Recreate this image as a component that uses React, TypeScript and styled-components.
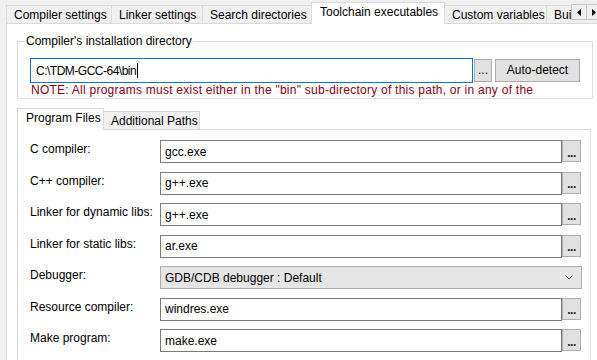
import styled, { createGlobalStyle } from "styled-components";

const GlobalStyle = createGlobalStyle`
  html, body {
    margin: 0;
    padding: 0;
    background: #f0f0f0;
  }
  * {
    box-sizing: border-box;
  }
`;

const Window = styled.div`
  width: 597px;
  height: 360px;
  overflow: hidden;
  position: relative;
  background: #f0f0f0;
  font-family: "Liberation Sans", Arial, sans-serif;
  font-size: 12px;
  color: #000;
`;

const TabStrip = styled.div`
  display: flex;
  align-items: flex-end;
  height: 23px;
  padding-left: 6px;
  white-space: nowrap;
`;

const Tab = styled.div<{ $w: number; $active?: boolean }>`
  flex: none;
  width: ${(p) => p.$w}px;
  height: ${(p) => (p.$active ? 22 : 18)}px;
  margin-right: -1px;
  margin-bottom: ${(p) => (p.$active ? -1 : 0)}px;
  padding: ${(p) => (p.$active ? "2px 0 0 8px" : "2px 0 0 7px")};
  border: 1px solid #d9d9d9;
  border-bottom: none;
  background: ${(p) => (p.$active ? "#fff" : "#f0f0f0")};
  position: relative;
  z-index: ${(p) => (p.$active ? 2 : 1)};
  line-height: 14px;
  overflow: hidden;
`;

const ScrollArrows = styled.div`
  position: absolute;
  left: 571px;
  top: 4px;
  display: flex;
  z-index: 3;
`;

const ArrowButton = styled.div`
  width: 16px;
  height: 16px;
  margin-right: -1px;
  border: 1px solid #c4c4c4;
  background: #f0f0f0;
  display: flex;
  align-items: center;
  justify-content: center;
`;

const Page = styled.div`
  width: 640px;
  height: 400px;
  margin-left: 6px;
  border: 1px solid #d9d9d9;
  background: #fff;
  padding: 10px 0 0 10px;
`;

const GroupBox = styled.fieldset`
  width: 576px;
  margin: 0;
  padding: 10px 12px 1px 12px;
  border: 1px solid #dcdcdc;
  min-width: 0;
`;

const Legend = styled.legend`
  padding: 0 1px;
  margin-left: -5px;
  line-height: 14px;
`;

const PathRow = styled.div`
  display: flex;
  align-items: center;
  height: 25px;
`;

const PathField = styled.div`
  width: 445px;
  height: 25px;
  border: 1px solid #0078d7;
  padding: 0 0 0 5px;
  display: flex;
  align-items: center;
  line-height: 14px;
  letter-spacing: -0.5px;
`;

const Caret = styled.span`
  display: inline-block;
  width: 1px;
  height: 15px;
  background: #000;
  margin-left: 1px;
`;

const PushButton = styled.div<{ $w: number; $ml?: number }>`
  flex: none;
  width: ${(p) => p.$w}px;
  height: 23px;
  margin-left: ${(p) => p.$ml ?? 0}px;
  border: 1px solid #adadad;
  background: #e1e1e1;
  display: flex;
  align-items: center;
  justify-content: center;
  line-height: 14px;
  padding-bottom: 1px;
`;

const Note = styled.div`
  color: #8c0014;
  line-height: 14px;
  white-space: nowrap;
  padding-left: 1px;
  letter-spacing: 0.25px;
`;

const InnerTabs = styled.div`
  margin-top: 9px;
`;

const InnerStrip = styled.div`
  display: flex;
  align-items: flex-end;
  height: 21px;
`;

const InnerPage = styled.div`
  width: 574px;
  height: 260px;
  border: 1px solid #d9d9d9;
  border-right-color: #e3e3e3;
  background: #fff;
  padding: 10px 0 0 12px;
`;

const Form = styled.div`
  display: flex;
  flex-direction: column;
  gap: 8.5px;
`;

const Row = styled.div`
  display: flex;
  align-items: flex-start;
  height: 23px;
`;

const Label = styled.div`
  width: 130px;
  flex: none;
  padding-top: 2px;
  line-height: 14px;
`;

const TextBox = styled.div`
  width: 402px;
  height: 23px;
  flex: none;
  border: 1px solid #7a7a7a;
  padding-left: 4px;
  display: flex;
  align-items: center;
  line-height: 14px;
`;

const SmallButton = styled.div`
  width: 19px;
  height: 22px;
  flex: none;
  border: 1px solid #adadad;
  background: #e1e1e1;
  display: flex;
  align-items: center;
  justify-content: center;
  padding-top: 3px;
  font-weight: bold;
  letter-spacing: -0.5px;
  color: #1a1a40;
`;

const Combo = styled.div`
  width: 422px;
  height: 23px;
  flex: none;
  border: 1px solid #adadad;
  background: #e5e5e5;
  padding: 0 8px 0 4px;
  display: flex;
  align-items: center;
  justify-content: space-between;
  line-height: 14px;
`;

const tabs = [
  { label: "Compiler settings", w: 106 },
  { label: "Linker settings", w: 92 },
  { label: "Search directories", w: 110 },
  { label: "Toolchain executables", w: 134, active: true },
  { label: "Custom variables", w: 103 },
  { label: "Bui", w: 90 },
];

type Field = { label: string; value: string; combo?: boolean };

const fields: Field[] = [
  { label: "C compiler:", value: "gcc.exe" },
  { label: "C++ compiler:", value: "g++.exe" },
  { label: "Linker for dynamic libs:", value: "g++.exe" },
  { label: "Linker for static libs:", value: "ar.exe" },
  { label: "Debugger:", value: "GDB/CDB debugger : Default", combo: true },
  { label: "Resource compiler:", value: "windres.exe" },
  { label: "Make program:", value: "make.exe" },
];

const App = () => {
  return (
    <Window>
      <GlobalStyle />
      <TabStrip>
        {tabs.map((t) => (
          <Tab key={t.label} $w={t.w} $active={t.active}>
            {t.label}
          </Tab>
        ))}
      </TabStrip>
      <ScrollArrows>
        <ArrowButton>
          <svg width="4" height="7" viewBox="0 0 4 7">
            <path d="M4 0 L0 3.5 L4 7 Z" fill="#000" />
          </svg>
        </ArrowButton>
        <ArrowButton>
          <svg width="4" height="7" viewBox="0 0 4 7">
            <path d="M0 0 L4 3.5 L0 7 Z" fill="#000" />
          </svg>
        </ArrowButton>
      </ScrollArrows>
      <Page>
        <GroupBox>
          <Legend>Compiler's installation directory</Legend>
          <PathRow>
            <PathField>
              C:\TDM-GCC-64\bin
              <Caret />
            </PathField>
            <PushButton $w={18} $ml={1}>...</PushButton>
            <PushButton $w={85} $ml={3}>Auto-detect</PushButton>
          </PathRow>
          <Note>
            NOTE: All programs must exist either in the "bin" sub-directory of this path, or in any of the
          </Note>
        </GroupBox>
        <InnerTabs>
          <InnerStrip>
            <Tab $w={87} $active>Program Files</Tab>
            <Tab $w={97}>Additional Paths</Tab>
          </InnerStrip>
          <InnerPage>
            <Form>
              {fields.map((f) => (
                <Row key={f.label}>
                  <Label>{f.label}</Label>
                  {f.combo ? (
                    <Combo>
                      {f.value}
                      <svg width="8" height="5" viewBox="0 0 8 5">
                        <path d="M0.5 0.5 L4 4 L7.5 0.5" fill="none" stroke="#555" strokeWidth="1" />
                      </svg>
                    </Combo>
                  ) : (
                    <>
                      <TextBox>{f.value}</TextBox>
                      <SmallButton>...</SmallButton>
                    </>
                  )}
                </Row>
              ))}
            </Form>
          </InnerPage>
        </InnerTabs>
      </Page>
    </Window>
  );
};

export default App;
